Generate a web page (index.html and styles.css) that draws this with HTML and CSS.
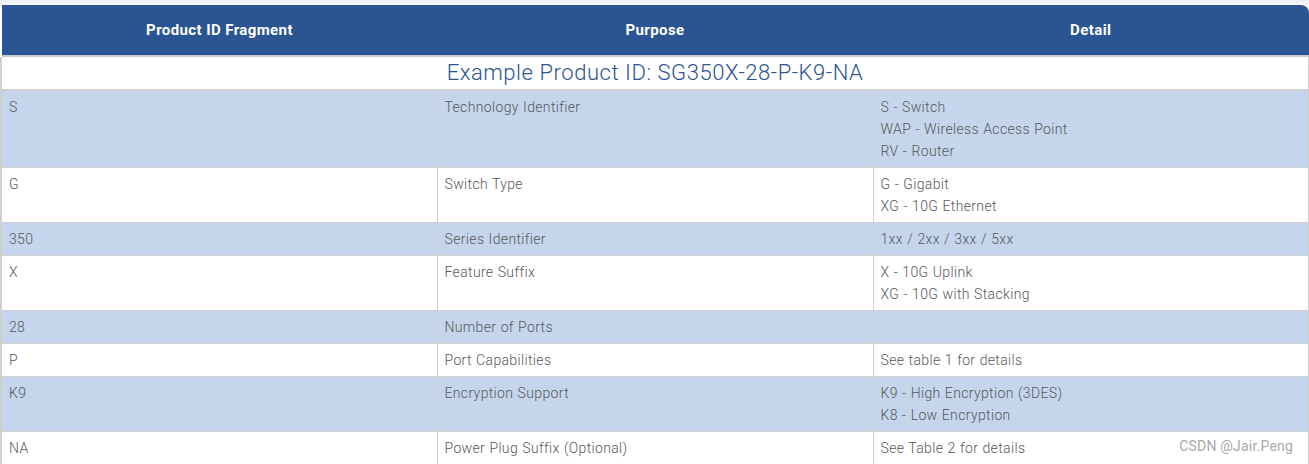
FILE: index.html
```html
<!DOCTYPE html>
<html>
<head>
<meta charset="utf-8">
<link rel="stylesheet" href="styles.css">
</head>
<body>
<div class="page">
<table class="pid">
  <thead>
    <tr>
      <th class="c1">Product ID Fragment</th>
      <th class="c2">Purpose</th>
      <th class="c3">Detail</th>
    </tr>
  </thead>
  <tbody>
    <tr class="example"><td colspan="3">Example Product ID: SG350X-28-P-K9-NA</td></tr>
    <tr class="blue"><td>S</td><td>Technology Identifier</td><td>S - Switch<br>WAP - Wireless Access Point<br>RV - Router</td></tr>
    <tr><td>G</td><td>Switch Type</td><td>G - Gigabit<br>XG - 10G Ethernet</td></tr>
    <tr class="blue"><td>350</td><td>Series Identifier</td><td>1xx / 2xx / 3xx / 5xx</td></tr>
    <tr><td>X</td><td>Feature Suffix</td><td>X - 10G Uplink<br>XG - 10G with Stacking</td></tr>
    <tr class="blue"><td>28</td><td>Number of Ports</td><td></td></tr>
    <tr><td>P</td><td>Port Capabilities</td><td>See table 1 for details</td></tr>
    <tr class="blue"><td>K9</td><td>Encryption Support</td><td>K9 - High Encryption (3DES)<br>K8 - Low Encryption</td></tr>
    <tr><td>NA</td><td>Power Plug Suffix (Optional)</td><td>See Table 2 for details</td></tr>
  </tbody>
</table>
<div class="watermark">CSDN @Jair.Peng</div>
</div>
</body>
</html>
```
FILE: styles.css
```css
html, body {
  margin: 0;
  padding: 0;
  background: #fff;
  overflow: hidden;
}
.page {
  position: relative;
  padding-top: 5px;
  background: linear-gradient(#eceff4, #f6f7f9 5px, #fff 5px);
  height: 459px;
  font-family: Roboto, "Liberation Sans", sans-serif;
}
.pid {
  border-collapse: collapse;
  width: 1309px;
  table-layout: fixed;
}
.pid th {
  background: #2b5592;
  color: #fff;
  font-weight: 700;
  font-size: 15px;
  letter-spacing: 0.4px;
  height: 50px;
  padding: 0;
  text-align: center;
}
.pid th.c1 { width: 435px; border-left: 2px solid #fff; }
.pid th.c2 { width: 436px; }
.pid th.c3 { border-top-right-radius: 8px; }
.pid td {
  font-size: 14px;
  font-weight: 300;
  letter-spacing: 0.35px;
  word-spacing: 0.5px;
  line-height: 22px;
  color: #57575b;
  vertical-align: top;
  padding: 5px 7px 5px 7px;
  border: 1px solid #cfcfcf;
}
.pid td:first-child {
  border-left: 2px solid #cfcfcf;
}
.pid tr.example td {
  border-top: 2px solid #cacaca;
  border-bottom: 2px solid #cfcfcf;
  color: #2b5592;
  font-size: 22px;
  font-weight: 300;
  letter-spacing: 0.55px;
  word-spacing: 0;
  text-align: center;
  line-height: 32px;
  padding: 0;
}
.pid tr.blue td {
  background: #c5d6ec;
}
.watermark {
  position: absolute;
  right: 16px;
  top: 438px;
  font-size: 14px;
  letter-spacing: 0.2px;
  color: #a8a8a8;
  font-family: Roboto, "Liberation Sans", sans-serif;
}
```
